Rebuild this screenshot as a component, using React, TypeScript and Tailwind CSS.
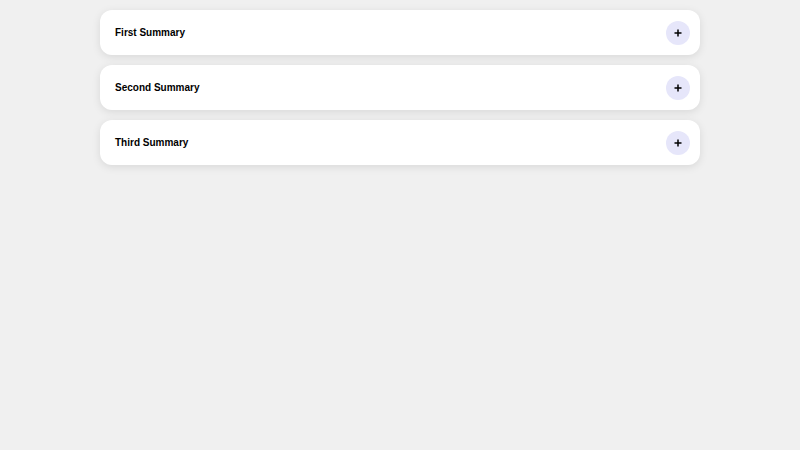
import React, { useState } from 'react';

const items = ['First Summary', 'Second Summary', 'Third Summary'];

const AccordionItem: React.FC<{ title: string }> = ({ title }) => {
  const [open, setOpen] = useState(false);

  return (
    <div className="bg-white rounded-xl shadow-[0_2px_8px_rgba(0,0,0,0.1)]">
      <button
        onClick={() => setOpen(!open)}
        className="w-full h-[45px] flex items-center justify-between pl-[15px] pr-[10px] text-left"
      >
        <span className="text-[10px] font-bold text-black">{title}</span>
        <span className="w-6 h-6 rounded-full bg-[#e6e6fa] flex items-center justify-center">
          <svg width="10" height="10" viewBox="0 0 10 10" className="text-black">
            <path d="M5 1.5v7M1.5 5h7" stroke="currentColor" strokeWidth="1.5" />
          </svg>
        </span>
      </button>
      {open && <div className="px-[15px] pb-3 text-[10px] text-gray-600">Details</div>}
    </div>
  );
};

export default function App() {
  return (
    <div className="min-h-screen bg-[#f0f0f0] pt-[10px] font-['Liberation_Sans',Arial,sans-serif]">
      <div className="w-[600px] mx-auto flex flex-col gap-[10px]">
        {items.map((t) => (
          <AccordionItem key={t} title={t} />
        ))}
      </div>
    </div>
  );
}
